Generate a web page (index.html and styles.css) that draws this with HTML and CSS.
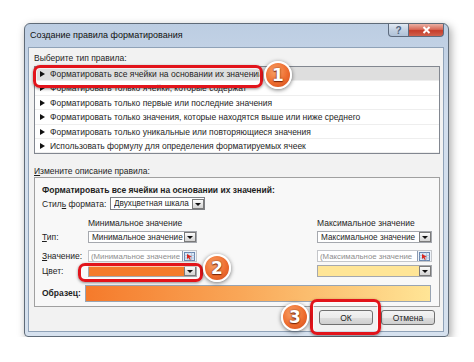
FILE: index.html
```html
<!DOCTYPE html>
<html lang="ru">
<head>
    <meta charset="UTF-8">
    <title>Создание правила форматирования</title>
    <link rel="stylesheet" href="styles.css">
</head>
<body>
    <div class="window">
        <div class="titlebar">
            <span class="title">Создание правила форматирования</span>
            <div class="caption-buttons">
                <span class="cap-btn help">?</span>
                <span class="cap-btn close">
                    <svg width="9" height="8" viewBox="0 0 9 8"><path d="M1.5 1 L7.5 7 M7.5 1 L1.5 7" stroke="#fff" stroke-width="2"/></svg>
                </span>
            </div>
        </div>

        <div class="client">
            <div class="group-label">Выберите тип правила:</div>
            <ul class="rule-list">
                <li class="selected">Форматировать все ячейки на основании их значений</li>
                <li>Форматировать только ячейки, которые содержат</li>
                <li>Форматировать только первые или последние значения</li>
                <li>Форматировать только значения, которые находятся выше или ниже среднего</li>
                <li>Форматировать только уникальные или повторяющиеся значения</li>
                <li>Использовать формулу для определения форматируемых ячеек</li>
            </ul>

            <div class="group-label label-edit"><u>И</u>змените описание правила:</div>
            <div class="panel">
                <div class="panel-title">Форматировать все ячейки на основании их значений:</div>
                <div class="style-row">
                    <span class="style-label">Стил<u>ь</u> формата:</span>
                    <div class="combo combo-style"><span class="clip">Двухцветная шкала</span><span class="arrow"></span></div>
                </div>

                <div class="row row-head">
                    <span class="field-label"></span>
                    <span class="head-min">Минимальное значение</span>
                    <span class="head-max">Максимальное значение</span>
                </div>
                <div class="row row-type">
                    <span class="field-label"><u>Т</u>ип:</span>
                    <div class="combo combo-min"><span class="clip">Минимальное значение</span><span class="arrow"></span></div>
                    <div class="combo combo-max"><span class="clip">Максимальное значение</span><span class="arrow"></span></div>
                </div>
                <div class="row row-value">
                    <span class="field-label"><u>З</u>начение:</span>
                    <div class="combo combo-min input-off"><span class="clip">(Минимальное значение</span><span class="picker">
                        <svg width="11" height="9" viewBox="0 0 11 9"><rect x="0.5" y="0.5" width="10" height="8" fill="#dbe8f7" stroke="#6b88b0"/><path d="M0.5 3.5 H10.5 M0.5 6 H10.5 M4 0.5 V8.5 M7.5 0.5 V8.5" stroke="#9fb4cf" stroke-width="0.6"/><path d="M3 2 L8 5 L5.5 5.3 L6.8 7.5 L5.8 8 L4.6 5.8 L3 7 Z" fill="#d8251c"/></svg>
                    </span></div>
                    <div class="combo combo-max input-off"><span class="clip">(Максимальное значение</span><span class="picker">
                        <svg width="11" height="9" viewBox="0 0 11 9"><rect x="0.5" y="0.5" width="10" height="8" fill="#dbe8f7" stroke="#6b88b0"/><path d="M0.5 3.5 H10.5 M0.5 6 H10.5 M4 0.5 V8.5 M7.5 0.5 V8.5" stroke="#9fb4cf" stroke-width="0.6"/><path d="M3 2 L8 5 L5.5 5.3 L6.8 7.5 L5.8 8 L4.6 5.8 L3 7 Z" fill="#d8251c"/></svg>
                    </span></div>
                </div>
                <div class="row row-color">
                    <span class="field-label">Цвет:</span>
                    <div class="combo combo-min color-min"><span class="arrow"></span></div>
                    <div class="combo combo-max color-max"><span class="arrow"></span></div>
                </div>

                <div class="sample-row">
                    <span class="sample-label">Образец:</span>
                    <div class="sample-bar"></div>
                </div>
            </div>

            <div class="buttons">
                <button class="btn">ОК</button>
                <button class="btn">Отмена</button>
            </div>
        </div>

        <!-- callouts over the dialog -->
        <div class="mark mark-1"></div>
        <div class="mark mark-2"></div>
        <div class="mark mark-3"></div>
        <div class="callout callout-1">1</div>
        <div class="callout callout-2">2</div>
        <div class="callout callout-3">3</div>
    </div>
</body>
</html>
```

FILE: styles.css
```css
* {
    margin: 0;
    padding: 0;
    box-sizing: border-box;
}

body {
    background: #fff;
    font-family: 'Liberation Sans', Arial, sans-serif;
    font-size: 8.5px;
    color: #1e1e1e;
    padding: 23px 0 0 24px;
}

.window {
    position: relative;
    width: 425px;
    height: 314px;
    border: 1px solid #5f6b78;
    border-radius: 6px 6px 4px 4px;
    background: linear-gradient(180deg, #bccde2 0%, #d2deed 30%, #d6e1ee 100%);
    box-shadow: 2px 3px 9px rgba(0,0,0,0.35);
    padding: 0 4px 4px 3px;
    display: flex;
    flex-direction: column;
}

.titlebar {
    height: 23px;
    display: flex;
    align-items: flex-start;
    flex-shrink: 0;
}

.title {
    margin: 5px 0 0 2px;
    font-size: 9px;
    line-height: 12px;
    color: #111;
}

.caption-buttons {
    margin-left: auto;
    display: flex;
}

.cap-btn {
    height: 13px;
    display: flex;
    align-items: center;
    justify-content: center;
    border: 1px solid #5d6b7e;
    border-top: none;
}

.help {
    width: 21px;
    border-radius: 0 0 0 4px;
    background: linear-gradient(#e1e9f3, #c3d1e2 50%, #afc1d7);
    color: #4f627c;
    font-weight: bold;
    font-size: 10px;
}

.close {
    width: 35px;
    border-left: none;
    border-radius: 0 0 4px 0;
    background: linear-gradient(#eab0a4, #d86a58 45%, #c63d2b 55%, #d0614d);
}

.client {
    flex: 1;
    background: #f2f2f2;
    border: 1px solid #8fa2b8;
    padding: 4px 3px 0 5px;
    display: flex;
    flex-direction: column;
}

.group-label {
    height: 12px;
    line-height: 12px;
}

.label-edit {
    margin-top: 11px;
}

.rule-list {
    list-style: none;
    margin-top: 2px;
    height: 88px;
    border: 1px solid #828790;
    background: #fff;
}

.rule-list li {
    position: relative;
    height: 14.4px;
    line-height: 14px;
    padding-left: 15px;
    border-bottom: 1px solid #eeeeee;
    white-space: nowrap;
}

.rule-list li::before {
    content: '';
    position: absolute;
    left: 5px;
    top: 4px;
    border-left: 5px solid #111;
    border-top: 3px solid transparent;
    border-bottom: 3px solid transparent;
}

.rule-list li.selected {
    background: #dedede;
}

.panel {
    height: 130px;
    border: 1px solid #a0a0a0;
    background: #f8f8f8;
    padding: 7px 7px 0 7px;
}

.panel-title {
    font-weight: bold;
    height: 11px;
    line-height: 11px;
    white-space: nowrap;
}

.style-row {
    margin-top: 1px;
    height: 13px;
    display: flex;
    align-items: center;
}

.style-label {
    width: 68px;
    flex-shrink: 0;
    white-space: nowrap;
}

.combo {
    height: 12px;
    background: #fff;
    border: 1px solid #a5a8ae;
    display: flex;
    align-items: center;
    padding-left: 3px;
    white-space: nowrap;
    overflow: hidden;
    font-size: 8.2px;
}

.combo-style {
    width: 95px;
    height: 13px;
    border-color: #7d7f84;
}

.clip {
    overflow: hidden;
    flex: 1;
    min-width: 0;
}

.arrow {
    position: relative;
    margin-left: auto;
    flex-shrink: 0;
    width: 12px;
    height: 10px;
    border: 1px solid #7a7a7a;
    background: linear-gradient(#fdfdfd, #e6e6e6 50%, #d4d4d4);
}

.arrow::after {
    content: '';
    position: absolute;
    left: 2px;
    top: 3px;
    border-top: 3px solid #111;
    border-left: 3px solid transparent;
    border-right: 3px solid transparent;
}

.row {
    display: flex;
    height: 12px;
    align-items: center;
    white-space: nowrap;
}

.field-label {
    width: 46px;
    flex-shrink: 0;
}

.row-head {
    margin-top: 7px;
}

.head-min {
    width: 229px;
    flex-shrink: 0;
}

.row-type {
    margin-top: 2px;
}

.row-value {
    margin-top: 7px;
}

.row-color {
    margin-top: 3px;
}

.combo-min {
    width: 109px;
    flex-shrink: 0;
}

.combo-max {
    width: 115px;
    margin-left: 120px;
    flex-shrink: 0;
}

.input-off {
    color: #8e8e8e;
    border-color: #c4c6ca;
    font-size: 7.8px;
    padding-left: 2px;
}

.picker {
    flex-shrink: 0;
    width: 15px;
    height: 12px;
    margin-right: -1px;
    border: 1px solid #8c9cb3;
    background: #eef3f9;
    display: flex;
    align-items: center;
    justify-content: center;
}

.color-min {
    background: #f47b2b;
}

.color-max {
    background: #ffe596;
}

.sample-row {
    margin-top: 8px;
    height: 17px;
    display: flex;
}

.sample-label {
    width: 43px;
    flex-shrink: 0;
    font-weight: bold;
    line-height: 17px;
}

.sample-bar {
    width: 346px;
    border: 1px solid #98a4b3;
    background: linear-gradient(90deg, #f57a2b, #f9a758 45%, #ffe596);
}

.buttons {
    margin-top: 3px;
    margin-right: 5px;
    display: flex;
    justify-content: flex-end;
    gap: 8px;
}

.btn {
    width: 54px;
    height: 15px;
    border: 1px solid #707070;
    border-radius: 3px;
    background: linear-gradient(#f3f3f3, #ebebeb 50%, #dddddd 51%, #cfcfcf);
    font-family: 'Liberation Sans', Arial, sans-serif;
    font-size: 8.5px;
    color: #1e1e1e;
}

/* red highlight frames and numbered callouts */
.mark {
    position: absolute;
    border: 3px solid #e2141b;
    border-radius: 7px;
    box-shadow: 0 1px 3px rgba(0,0,0,0.45), inset 0 0 0 1px rgba(255,255,255,0.6);
}

.mark-1 { left: 8px; top: 41px; width: 230px; height: 23px; }
.mark-2 { left: 53px; top: 239px; width: 125px; height: 19px; }
.mark-3 { left: 285px; top: 275px; width: 71px; height: 36px; }

.callout {
    position: absolute;
    width: 28px;
    height: 28px;
    border-radius: 50%;
    border: 2px solid #fff;
    background: radial-gradient(circle at 40% 35%, #f9a468, #ee6d2f 55%, #cc4a1d);
    box-shadow: 0 1px 4px rgba(0,0,0,0.55);
    color: #fff;
    font-family: 'DejaVu Sans', sans-serif;
    font-weight: bold;
    font-size: 17px;
    display: flex;
    align-items: center;
    justify-content: center;
    text-shadow: 0 0 2px #7a2408, 0 1px 1px #7a2408;
}

.callout-1 { left: 239px; top: 37px; }
.callout-2 { left: 178px; top: 230px; }
.callout-3 { left: 256px; top: 279px; }
```
